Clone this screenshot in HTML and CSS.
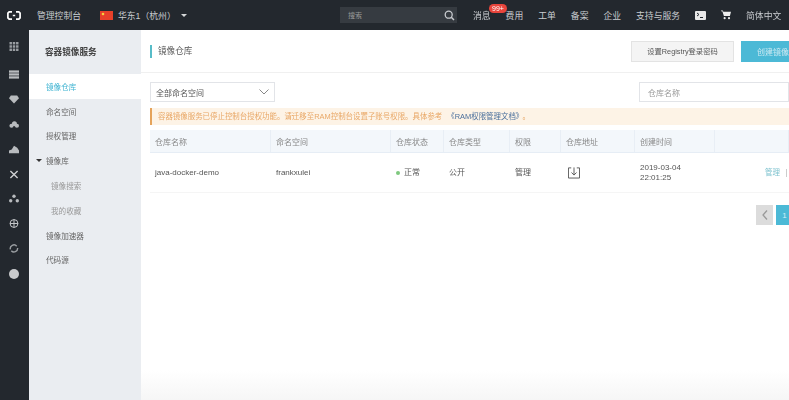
FILE: index.html
```html
<!DOCTYPE html>
<html>
  <head>
    <meta name="viewport" content="width=device-width, initial-scale=1">
    <link rel="stylesheet" href="styles.css">
  </head>
  <body>
    <header class="topbar">
      <div class="logo">
        <svg width="14" height="9" viewBox="0 0 14 9"><path d="M5 .9H2.200L.9 2.200v4.600L2.200 8.100H5M9 .9h2.800l1.300 1.300v4.600l-1.300 1.300H9M5.800 4.500h2.400" fill="none" stroke="#fff" stroke-width="1.700"/></svg>
      </div>
      <span class="console">管理控制台</span>
      <div class="region">
        <svg class="flag" width="13" height="9" viewBox="0 0 13 9"><rect width="13" height="9" fill="#e8402a"/><circle cx="3" cy="3" r="1.300" fill="#f5d23c"/></svg>
        <span>华东1（杭州）</span>
        <i class="caret"></i>
      </div>
      <div class="search">
        <span>搜索</span>
        <svg width="11" height="11" viewBox="0 0 11 11"><circle cx="4.700" cy="4.700" r="3.500" fill="none" stroke="#c9ccd0" stroke-width="1.300"/><path d="M7.300 7.300L10 10" stroke="#c9ccd0" stroke-width="1.500"/></svg>
      </div>
      <nav class="topnav">
        <span class="msg">消息<b class="badge">99+</b></span>
        <span>费用</span>
        <span>工单</span>
        <span>备案</span>
        <span>企业</span>
        <span>支持与服务</span>
        <svg width="11" height="9" viewBox="0 0 11 9"><rect width="11" height="9" rx="1" fill="#e8e8e8"/><path d="M2 2l2 1.500L2 5M5 6.500h3" fill="none" stroke="#23282e"/></svg>
        <svg width="10" height="10" viewBox="0 0 11 10"><path d="M0 0h2l.6 1.500H11L9.800 6H3.200L1.500 1H0z" fill="#eee"/><circle cx="4" cy="8.500" r="1.200" fill="#eee"/><circle cx="8.800" cy="8.500" r="1.200" fill="#eee"/></svg>
        <span>简体中文</span>
      </nav>
    </header>

    <div class="layout">
      <aside class="rail">
        <svg class="rail-first" viewBox="0 0 11 11" fill="#9a9ea2"><rect width="3" height="3"/><rect x="4" width="3" height="3"/><rect x="8" width="3" height="3"/><rect y="4" width="3" height="3"/><rect x="4" y="4" width="3" height="3"/><rect x="8" y="4" width="3" height="3"/><rect y="8" width="3" height="3"/><rect x="4" y="8" width="3" height="3"/><rect x="8" y="8" width="3" height="3"/></svg>
        <svg viewBox="0 0 11 9" fill="#b8bbbe"><rect width="11" height="2.500"/><rect y="3.200" width="11" height="2.500"/><rect y="6.500" width="11" height="2.500"/></svg>
        <svg viewBox="0 0 11 9" fill="#b8bbbe"><path d="M2 0h7l2 3-5.500 6L0 3z"/></svg>
        <svg viewBox="0 0 12 8" fill="#b8bbbe"><circle cx="3" cy="5.500" r="2.500"/><circle cx="6.500" cy="3" r="3"/><circle cx="9.500" cy="5.500" r="2.500"/></svg>
        <svg viewBox="0 0 11 8" fill="#b8bbbe"><path d="M0 8V5l3-1 2.500-4L9 2l2 3v3z"/></svg>
        <svg viewBox="0 0 10 10" fill="none" stroke="#d0d2d4" stroke-width="1.500"><path d="M1 1l8 8M9 1l-8 8"/></svg>
        <svg viewBox="0 0 10 8" fill="#b8bbbe"><circle cx="5" cy="1.700" r="1.700"/><circle cx="1.700" cy="6.300" r="1.700"/><circle cx="8.300" cy="6.300" r="1.700"/></svg>
        <svg viewBox="0 0 11 11" fill="none" stroke="#c8cacc" stroke-width="1.200"><circle cx="5.500" cy="5.500" r="4.800"/><path d="M5.500 .7v9.600M.7 5.500h9.600"/></svg>
        <svg viewBox="0 0 10 10" fill="none" stroke="#9a9ea2" stroke-width="1.600"><path d="M1 6a4 4 0 0 1 7-3.500M9 4.500a4 4 0 0 1-7 3"/></svg>
        <svg class="rail-dot" viewBox="0 0 10 10"><circle cx="5" cy="5" r="5" fill="#c8cacc"/></svg>
      </aside>

      <aside class="sidebar">
        <h2 class="side-title">容器镜像服务</h2>
        <a class="side-item active">镜像仓库</a>
        <a class="side-item">命名空间</a>
        <a class="side-item">授权管理</a>
        <a class="side-item side-group"><i class="caret dark"></i>镜像库</a>
        <a class="side-item sub">镜像搜索</a>
        <a class="side-item sub">我的收藏</a>
        <a class="side-item">镜像加速器</a>
        <a class="side-item">代码源</a>
      </aside>

      <main class="main">
        <div class="page-head">
          <h1 class="page-title">镜像仓库</h1>
          <button class="btn">设置Registry登录密码</button>
          <button class="btn primary">创建镜像仓库</button>
        </div>

        <div class="content">
          <div class="filters">
            <div class="select">
              <span>全部命名空间</span>
              <svg width="10" height="6" viewBox="0 0 10 6"><path d="M.5 .5L5 5 9.500 .5" fill="none" stroke="#888"/></svg>
            </div>
            <div class="name-input">仓库名称</div>
          </div>

          <div class="notice">
            容器镜像服务已停止控制台授权功能。请迁移至RAM控制台设置子账号权限。具体参考<a>《RAM权限管理文档》</a>。
          </div>

          <div class="table">
            <div class="row thead">
              <span>仓库名称</span>
              <span>命名空间</span>
              <span>仓库状态</span>
              <span>仓库类型</span>
              <span>权限</span>
              <span>仓库地址</span>
              <span>创建时间</span>
              <span></span>
            </div>
            <div class="row tbody">
              <span>java-docker-demo</span>
              <span>frankxulei</span>
              <span class="status"><i class="dot"></i>正常</span>
              <span>公开</span>
              <span>管理</span>
              <span>
                <svg class="dl" width="12" height="13" viewBox="0 0 13 13" fill="none" stroke="#555"><path d="M3.500 1.500H.5v11h12v-11h-3M6.500 1v8M3.800 6.500L6.500 9.300 9.200 6.500"/></svg>
              </span>
              <span class="date">2019-03-04<br>22:01:25</span>
              <span class="ops"><a>管理</a><i class="sep"></i></span>
            </div>
          </div>

          <div class="pager">
            <span class="page prev">
              <svg width="6" height="10" viewBox="0 0 6 10"><path d="M5 .5L1 5l4 4.500" fill="none" stroke="#999" stroke-width="1.300"/></svg>
            </span>
            <span class="page current">1</span>
          </div>
        </div>
      </main>
    </div>
  </body>
</html>
```

FILE: styles.css
```css
html, body {
  height: 100%;
  margin: 0;
  overflow: hidden;
}

body {
  font-family: "Liberation Sans", "Noto Sans CJK SC", sans-serif;
  font-size: 8px;
  color: #555;
  background-color: #fff;
  display: flex;
  flex-direction: column;
  filter: blur(0.35px); /* a referencia e uma captura ampliada */
}

/* barra superior */
.topbar {
  height: 30px;
  flex-shrink: 0;
  background-color: #23282e;
  color: #c9ccd0;
  display: flex;
  align-items: center;
  font-size: 8.8px;
}

.logo {
  width: 27px;
  display: flex;
  justify-content: center;
  margin-right: 10px;
}

.console {
  width: 63px;
}

.region {
  width: 240px;
  display: flex;
  align-items: center;
  gap: 5px;
  font-size: 8.8px;
}

.caret {
  width: 0;
  height: 0;
  border-left: 3px solid transparent;
  border-right: 3px solid transparent;
  border-top: 3px solid #d5d7d9;
}

.caret.dark {
  border-top-color: #333;
  margin-right: 4px;
}

.search {
  width: 117px;
  height: 16px;
  background-color: #363b41;
  display: flex;
  align-items: center;
  justify-content: space-between;
  box-sizing: border-box;
  padding: 0 2px 0 8px;
  font-size: 7px;
  color: #999;
}

.topnav {
  flex-grow: 1;
  display: flex;
  align-items: center;
  gap: 15px;
  padding-left: 16px;
  white-space: nowrap;
}

.msg {
  position: relative;
}

.badge {
  position: absolute;
  top: -5px;
  left: 16px;
  background-color: #e8453c;
  color: #fff;
  font-size: 7px;
  font-weight: normal;
  line-height: 9px;
  padding: 0 3px;
  border-radius: 5px;
}

/* barra de icones */
.layout {
  flex-grow: 1;
  display: flex;
  min-height: 0;
}

.rail {
  width: 29px;
  flex-shrink: 0;
  background-color: #23282e;
  display: flex;
  flex-direction: column;
  align-items: center;
  box-sizing: border-box;
  padding: 11.5px 2px 0 0;
}

.rail svg {
  display: block;
  width: 10px;
  height: 9px;
  margin-bottom: 15.9px;
}

.rail .rail-first {
  margin-bottom: 19.5px;
}

.rail .rail-dot {
  width: 10px;
  height: 10px;
}

/* menu lateral */
.sidebar {
  width: 112px;
  flex-shrink: 0;
  background-color: #eaedf1;
}

.side-title {
  margin: 0;
  height: 44px;
  line-height: 45px;
  padding-left: 16px;
  font-size: 8.6px;
  color: #444;
}

.side-item {
  display: flex;
  align-items: center;
  height: 24.8px;
  padding-left: 17px;
  font-size: 7.6px;
  color: #666;
}

.side-item.active {
  background-color: #fff;
  color: #3fb4d2;
}

.side-group {
  padding-left: 7px;
}

.side-item.sub {
  padding-left: 22px;
  color: #999;
}

/* area principal */
.main {
  flex-grow: 1;
  min-width: 0;
  display: flex;
  flex-direction: column;
  background: linear-gradient(#fff 92%, #f6f6f6);
}

.page-head {
  height: 43px;
  flex-shrink: 0;
  box-sizing: border-box;
  border-bottom: 1px solid #f0f0f0;
  display: flex;
  align-items: center;
  padding-left: 9px;
}

.page-title {
  margin: 0;
  font-size: 8.6px;
  font-weight: normal;
  color: #555;
  border-left: 2px solid #57bcc8;
  padding-left: 6px;
  line-height: 13px;
  flex-grow: 1;
}

.btn {
  height: 21px;
  width: 103px;
  flex-shrink: 0;
  margin: 0 7px 0 0;
  padding: 0;
  border: 1px solid #e3e3e3;
  background-color: #f4f4f4;
  color: #555;
  font: inherit;
  font-size: 7.3px;
}

.btn.primary {
  width: 80px;
  margin-right: -32px;
  border: none;
  background-color: #4cb9d6;
  color: #cdeaf3;
  font-size: 8px;
}

.content {
  padding: 9px 0 0 9px;
  width: 648px;
  box-sizing: border-box;
}

.filters {
  display: flex;
  justify-content: space-between;
  height: 20px;
}

.select,
.name-input {
  box-sizing: border-box;
  height: 20px;
  border: 1px solid #e2e4e8;
  display: flex;
  align-items: center;
  padding: 0 5px;
}

.select {
  width: 125px;
  justify-content: space-between;
}

.name-input {
  width: 150px;
  padding-left: 8px;
  color: #999;
}

.notice {
  margin-top: 6px;
  height: 17px;
  line-height: 17px;
  background-color: #fdf3e6;
  border-left: 2px solid #e5a35b;
  padding-left: 6px;
  font-size: 7.45px;
  color: #e9a867;
  white-space: nowrap;
}

.notice a {
  color: #4a6f9c;
  margin: 0 3px 0 5px;
}

.table {
  margin-top: 5px;
}

.row {
  display: grid;
  grid-template-columns: 121px 120px 53px 66px 51px 74px 80px 74px;
  align-items: center;
}

.row > span {
  padding-left: 5px;
}

.thead {
  height: 23px;
  background-color: #f3f7fb;
  border-bottom: 1px solid #e6edf5;
  color: #888;
  box-sizing: border-box;
}

.thead > span {
  height: 100%;
  display: flex;
  align-items: center;
  border-right: 1px solid #e8eef5;
  box-sizing: border-box;
}

.tbody {
  height: 39px;
  line-height: 12px;
  border-bottom: 1px solid #f5f5f5;
  color: #555;
}

.date {
  line-height: 10px;
}

.status {
  display: flex;
  align-items: center;
  gap: 4px;
}

.dot {
  width: 4px;
  height: 4px;
  border-radius: 50%;
  background-color: #7ec87e;
}

.dl {
  display: block;
  margin-left: 2px;
}

.ops {
  display: flex;
  justify-content: flex-end;
  align-items: center;
  gap: 6px;
  padding-right: 2px;
  font-size: 7.5px;
}

.ops a {
  color: #7fc3cf;
}

.sep {
  width: 1px;
  height: 8px;
  background-color: #ccc;
}

.pager {
  display: flex;
  justify-content: flex-end;
  gap: 3px;
  margin-top: 12px;
  margin-right: -4px;
}

.page {
  height: 20px;
  display: flex;
  align-items: center;
  justify-content: center;
}

.prev {
  width: 17px;
  background-color: #dcdcdc;
}

.current {
  width: 17px;
  background-color: #4cb9d6;
  color: #d5eff6;
}
```
